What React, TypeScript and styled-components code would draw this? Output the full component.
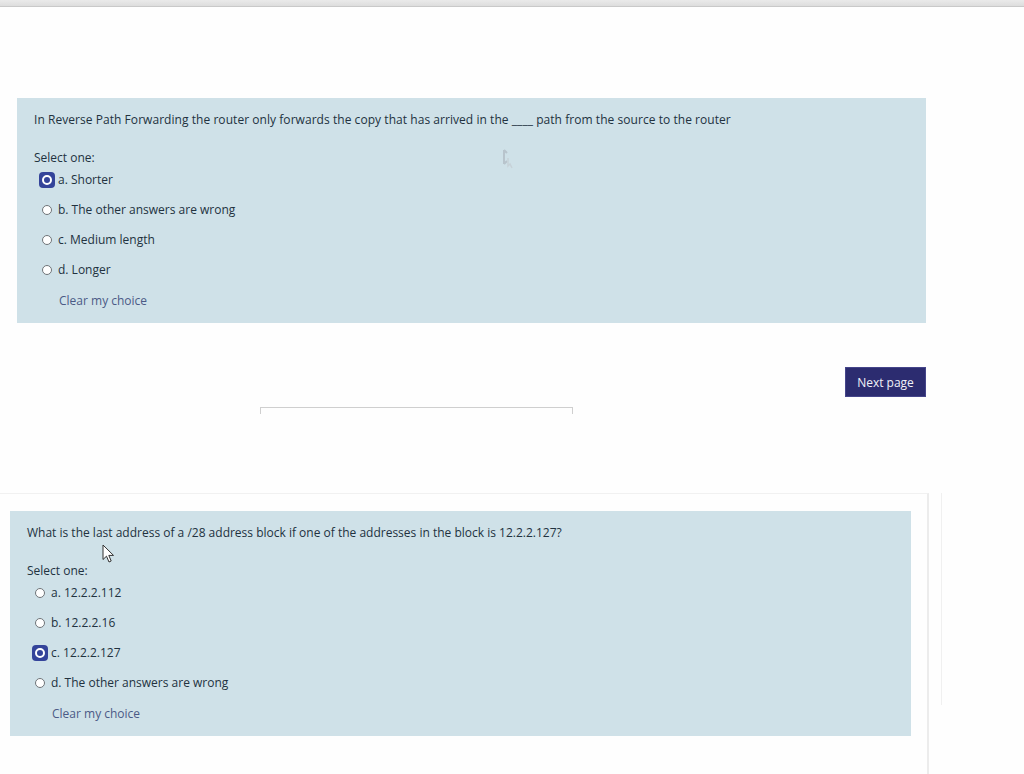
import React from "react"
import styled, { createGlobalStyle } from "styled-components"

const GlobalStyle = createGlobalStyle`
  html, body {
    margin: 0;
    padding: 0;
    background: #fefefe;
    font-family: "Open Sans", "Noto Sans", sans-serif;
    color: #22323f;
  }
`

const Page = styled.div`
  position: relative;
  display: flex;
  flex-direction: column;
  width: 1024px;
  height: 774px;
  overflow: hidden;
`

const TopBar = styled.div`
  height: 6px;
  background: linear-gradient(#eaeaea, #dddddd);
  border-bottom: 1px solid #c9c9c9;
`

const Panel = styled.div<{ $left: number; $width: number }>`
  margin-left: ${(p) => p.$left}px;
  width: ${(p) => p.$width}px;
  box-sizing: border-box;
  background: #cfe1e8;
  padding: 13px 17px 13px;
  font-size: 12px;
  line-height: 18px;
`

const QuestionText = styled.div<{ $spacing: number }>`
  letter-spacing: ${(p) => p.$spacing}px;
  white-space: nowrap;
`

const Prompt = styled.div`
  margin-top: 20px;
  margin-bottom: 4px;
`

const Options = styled.div`
  display: flex;
  flex-direction: column;
  gap: 12px;
  padding-left: 7px;
`

const Option = styled.label`
  display: flex;
  align-items: center;
  gap: 5px;
  height: 18px;
`

const RadioSlot = styled.span`
  width: 12px;
  height: 16px;
  display: flex;
  align-items: center;
  justify-content: center;
`

const RadioOff = styled.span`
  width: 8px;
  height: 8px;
  border-radius: 50%;
  border: 1.5px solid #6f7478;
  background: #ffffff;
  flex: none;
`

const RadioOn = styled.span`
  width: 16px;
  height: 16px;
  border-radius: 4px;
  background: #34449a;
  display: flex;
  align-items: center;
  justify-content: center;
  flex: none;
  margin-left: -4px;
  margin-right: -4px;
  span {
    width: 6px;
    height: 6px;
    border-radius: 50%;
    border: 2px solid #ffffff;
    background: #34449a;
  }
`

const ClearLink = styled.div`
  margin-top: 13px;
  padding-left: 25px;
  color: #4b5a86;
`

const ButtonRow = styled.div`
  display: flex;
  justify-content: flex-end;
  width: 926px;
  margin-top: 44px;
`

const NextButton = styled.button`
  height: 30px;
  width: 81px;
  background: #2c2c70;
  color: #f2f2f8;
  border: 1px solid #45458a;
  font-family: "Open Sans", "Noto Sans", sans-serif;
  font-size: 12px;
  padding: 0;
`

const Bracket = styled.div`
  margin-top: 10px;
  margin-left: 260px;
  width: 313px;
  height: 7px;
  box-sizing: border-box;
  border: 1.5px solid #cfcfcf;
  border-bottom: none;
`

const LowerRow = styled.div`
  display: flex;
  margin-top: 79px;
  flex: 1;
`

const Card = styled.div`
  width: 929px;
  box-sizing: border-box;
  border-top: 1px solid #f1f1f1;
  border-right: 2px solid #ececec;
  padding-top: 17px;
`

const SideRule = styled.div`
  margin-left: 12px;
  width: 1px;
  height: 212px;
  background: #f0f0f0;
`

const Cursor = styled.svg<{ $x: number; $y: number }>`
  position: absolute;
  left: ${(p) => p.$x}px;
  top: ${(p) => p.$y}px;
`

type Answer = { label: string; checked?: boolean }

const Question = ({
  left,
  width,
  text,
  spacing,
  answers,
}: {
  left: number
  width: number
  text: string
  spacing: number
  answers: Answer[]
}) => (
  <Panel $left={left} $width={width}>
    <QuestionText $spacing={spacing}>{text}</QuestionText>
    <Prompt>Select one:</Prompt>
    <Options>
      {answers.map((a) => (
        <Option key={a.label}>
          <RadioSlot>
            {a.checked ? (
              <RadioOn>
                <span />
              </RadioOn>
            ) : (
              <RadioOff />
            )}
          </RadioSlot>
          {a.label}
        </Option>
      ))}
    </Options>
    <ClearLink>Clear my choice</ClearLink>
  </Panel>
)

export default function App() {
  return (
    <Page>
      <GlobalStyle />
      <TopBar />
      <div style={{ height: 91 }} />
      <Question
        left={17}
        width={909}
        spacing={0.05}
        text="In Reverse Path Forwarding the router only forwards the copy that has arrived in the ____ path from the source to the router"
        answers={[
          { label: "a. Shorter", checked: true },
          { label: "b. The other answers are wrong" },
          { label: "c. Medium length" },
          { label: "d. Longer" },
        ]}
      />
      <ButtonRow>
        <NextButton>Next page</NextButton>
      </ButtonRow>
      <Bracket />
      <LowerRow>
        <Card>
          <Question
            left={10}
            width={901}
            spacing={0}
            text="What is the last address of a /28 address block if one of the addresses in the block is 12.2.2.127?"
            answers={[
              { label: "a. 12.2.2.112" },
              { label: "b. 12.2.2.16" },
              { label: "c. 12.2.2.127", checked: true },
              { label: "d. The other answers are wrong" },
            ]}
          />
        </Card>
        <SideRule />
      </LowerRow>
      <Cursor $x={102} $y={544} width="14" height="20" viewBox="0 0 14 20">
        <path
          d="M1 1 L1 15.5 L4.5 12.2 L7 18 L9.2 17 L6.8 11.4 L11.5 11.4 Z"
          fill="#ffffff"
          stroke="#333333"
          strokeWidth="1"
          strokeLinejoin="round"
        />
      </Cursor>
      <Cursor $x={502} $y={148} width="12" height="22" viewBox="0 0 12 22">
        <path
          d="M2 2 L2 16 M2 2 L5 5 M2 16 L5 13"
          fill="none"
          stroke="#b8c4cc"
          strokeWidth="2"
        />
        <path d="M6 10 L6 18 L8 16 L10 20" fill="none" stroke="#c7d2d8" strokeWidth="1.5" />
      </Cursor>
    </Page>
  )
}
